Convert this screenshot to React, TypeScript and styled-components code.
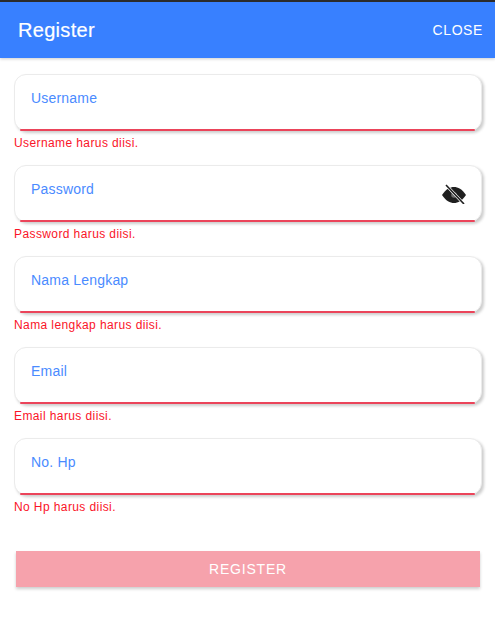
import styled, { createGlobalStyle } from 'styled-components';

const GlobalStyle = createGlobalStyle`
  html, body {
    margin: 0;
    padding: 0;
    background: #fff;
    font-family: "Liberation Sans", Arial, sans-serif;
  }
  * {
    box-sizing: border-box;
  }
`;

const Page = styled.div`
  width: 495px;
  height: 623px;
  background: #fff;
  border-top: 2px solid #2b2b2b;
  overflow: hidden;
`;

const Header = styled.header`
  height: 56px;
  display: flex;
  align-items: center;
  justify-content: space-between;
  padding: 0 12px 0 18px;
  background: #3880ff;
  color: #fff;
  box-shadow: 0 1px 3px rgba(0, 0, 0, 0.2);
`;

const Title = styled.h1`
  margin: 0;
  font-size: 20px;
  font-weight: 400;
  letter-spacing: 0.3px;
  -webkit-text-stroke: 0.2px #fff;
`;

const CloseButton = styled.button`
  padding: 0;
  border: 0;
  background: none;
  color: #fff;
  font-family: "Liberation Sans", Arial, sans-serif;
  font-size: 14px;
  letter-spacing: 0.6px;
`;

const Form = styled.form`
  display: flex;
  flex-direction: column;
  padding: 16px 13px 0 14px;
`;

const FieldGroup = styled.div`
  height: 91px;
`;

const InputBox = styled.div`
  position: relative;
  height: 57px;
  display: flex;
  justify-content: space-between;
  padding: 15px 16px 0;
  background: #fff;
  border: 1px solid #ebebeb;
  border-radius: 12px;
  box-shadow: 2px 2px 3px rgba(0, 0, 0, 0.2);

  &::after {
    content: '';
    position: absolute;
    left: 5px;
    right: 6px;
    bottom: -1px;
    height: 2px;
    border-radius: 1px;
    background: #eb445a;
  }
`;

const Label = styled.label`
  font-size: 14px;
  line-height: 16px;
  letter-spacing: 0.2px;
  color: #4a8bff;
`;

const EyeIcon = styled.svg`
  width: 24px;
  height: 20px;
  margin: 3px -1px 0 0;
`;

const ErrorText = styled.div`
  margin-top: 4px;
  font-size: 12px;
  line-height: 16px;
  letter-spacing: 0.4px;
  color: #fa1428;
`;

const SubmitButton = styled.button`
  height: 36px;
  width: 464px;
  margin: 22px 0 0 2px;
  border: 0;
  background: #f6a2ac;
  color: #fff;
  font-family: "Liberation Sans", Arial, sans-serif;
  font-size: 14px;
  letter-spacing: 0.8px;
  box-shadow: 0 2px 3px rgba(0, 0, 0, 0.2);
`;

const EyeOff = () => (
  <EyeIcon viewBox="0 0 24 20">
    <path
      d="M0 11 C4 5 8 3 12 3 C16 3 20 5 24 11 C20 17 16 19 12 19 C8 19 4 17 0 11 Z"
      fill="#1f1f1f"
    />
    <circle cx="12" cy="11" r="2.8" fill="#6e6e6e" />
    <path d="M4 1 L21 19" stroke="#fff" strokeWidth="2.8" />
    <path d="M4 1 L22 20" stroke="#1f1f1f" strokeWidth="1.6" />
  </EyeIcon>
);

const fields = [
  { label: 'Username', error: 'Username harus diisi.' },
  { label: 'Password', error: 'Password harus diisi.', secret: true },
  { label: 'Nama Lengkap', error: 'Nama lengkap harus diisi.' },
  { label: 'Email', error: 'Email harus diisi.' },
  { label: 'No. Hp', error: 'No Hp harus diisi.' },
];

const App = () => {
  return (
    <Page>
      <GlobalStyle />
      <Header>
        <Title>Register</Title>
        <CloseButton type="button">CLOSE</CloseButton>
      </Header>
      <Form>
        {fields.map((field) => (
          <FieldGroup key={field.label}>
            <InputBox>
              <Label>{field.label}</Label>
              {field.secret && <EyeOff />}
            </InputBox>
            <ErrorText>{field.error}</ErrorText>
          </FieldGroup>
        ))}
        <SubmitButton type="button">REGISTER</SubmitButton>
      </Form>
    </Page>
  );
};

export default App;
